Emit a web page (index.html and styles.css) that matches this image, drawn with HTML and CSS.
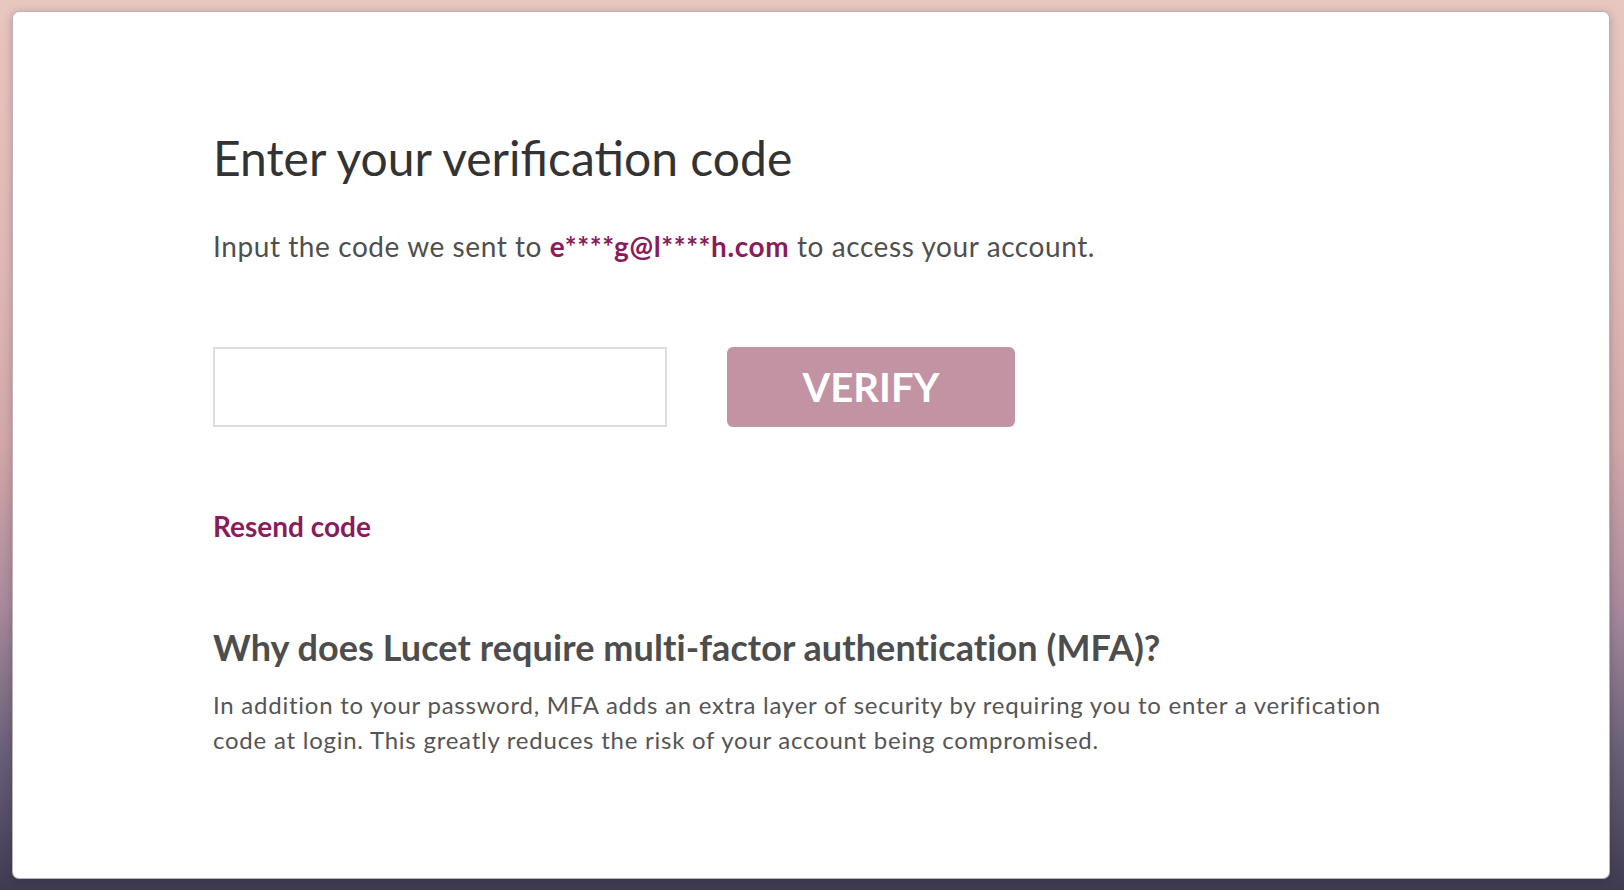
FILE: index.html
```html
<!DOCTYPE html>
<html lang="en">
<head>
<meta charset="utf-8">
<title>Enter your verification code</title>
<link rel="stylesheet" href="styles.css">
</head>
<body>
<main class="card">
  <h1 class="title">Enter your verification code</h1>
  <p class="lead">Input the code we sent to <strong class="email">e****g@l****h.com</strong> to access your account.</p>
  <form class="verify-row" onsubmit="return false">
    <input class="code-input" type="text" aria-label="Verification code">
    <button class="verify-btn" type="submit">VERIFY</button>
  </form>
  <a class="resend" href="#">Resend code</a>
  <h2 class="why">Why does Lucet require multi-factor authentication (MFA)?</h2>
  <p class="why-text">In addition to your password, MFA adds an extra layer of security by requiring you to enter a verification code at login. This greatly reduces the risk of your account being compromised.</p>
</main>
</body>
</html>
```
FILE: styles.css
```css
* { box-sizing: border-box; }
html, body { height: 100%; }
body {
  margin: 0;
  padding: 11px 14px 11px 12px;
  display: flex;
  font-family: Lato, "Open Sans", "Liberation Sans", sans-serif;
  background: linear-gradient(180deg, #e8c7c0 0%, #dfb9b5 30%, #d2a8a9 50%, #a98a9c 68%, #6a6179 84%, #3f3b52 100%);
}
.card {
  flex: 1;
  background: #fff;
  border: 1px solid rgba(60, 40, 50, 0.35);
  border-radius: 7px;
  box-shadow: 0 2px 10px rgba(40, 20, 40, 0.25);
  padding: 117px 0 0 200px;
  display: flex;
  flex-direction: column;
  align-items: flex-start;
}
.title {
  margin: 0;
  font-size: 48px;
  line-height: 58px;
  font-weight: 400;
  color: #333;
}
.lead {
  margin: 42px 0 0;
  font-size: 28px;
  line-height: 34px;
  letter-spacing: 0.58px;
  color: #4f4f4f;
}
.email { color: #8b1c5b; font-weight: 700; }
.verify-row {
  margin: 84px 0 0;
  display: flex;
  gap: 60px;
}
.code-input {
  width: 454px;
  height: 80px;
  border: 2px solid #dddddd;
  border-radius: 0;
  background: #fff;
  font: inherit;
  font-size: 28px;
  padding: 0 16px;
  outline: none;
}
.verify-btn {
  width: 288px;
  height: 80px;
  border: 0;
  border-radius: 6px;
  background: #c293a3;
  color: #fff;
  font-family: inherit;
  font-size: 40px;
  font-weight: 700;
  line-height: 1;
  padding: 0;
  display: flex;
  align-items: center;
  justify-content: center;
}
.resend {
  margin-top: 82px;
  font-size: 28px;
  line-height: 34px;
  font-weight: 700;
  color: #8b1c5b;
  text-decoration: none;
}
.why {
  margin: 82px 0 0;
  font-size: 36px;
  line-height: 44px;
  font-weight: 700;
  letter-spacing: 0.08px;
  color: #4d4d4d;
}
.why-text {
  margin: 18px 0 0;
  max-width: 1200px;
  font-size: 24px;
  line-height: 35px;
  letter-spacing: 0.76px;
  color: #555;
}
```
